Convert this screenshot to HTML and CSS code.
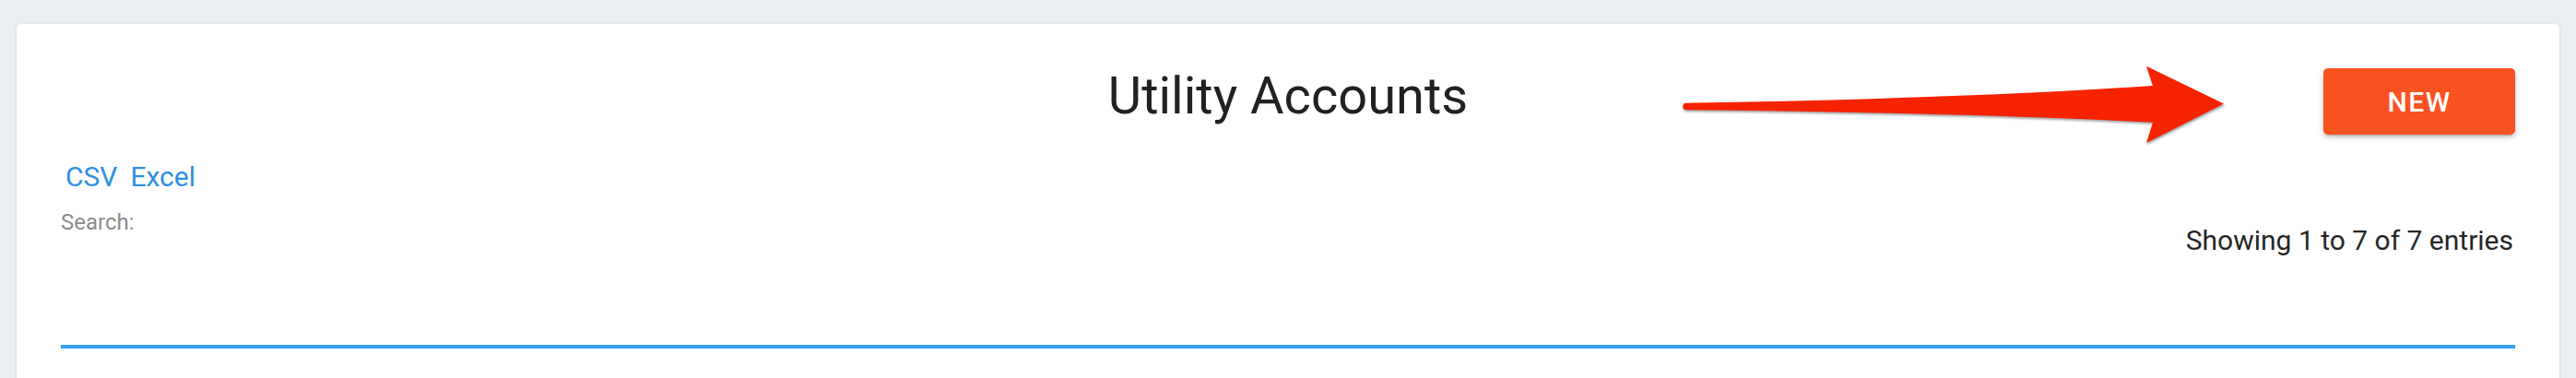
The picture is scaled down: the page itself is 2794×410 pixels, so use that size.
FILE: index.html
```html
<!DOCTYPE html>
<html lang="en">
<head>
<meta charset="utf-8">
<title>Utility Accounts</title>
<link rel="stylesheet" href="styles.css">
</head>
<body>
<main class="card">
  <header class="card-header">
    <div class="spacer"></div>
    <h1 class="title">Utility Accounts</h1>
    <div class="actions">
      <button class="btn-new" type="button">NEW</button>
    </div>
    <svg class="annotation-arrow" width="600" height="100" viewBox="0 0 600 100" aria-hidden="true">
      <path d="M4,46.7 Q300,42 510,28 L503,6.7 L587,47.5 L503,90 L510,67.7 Q300,57 4,54.3 A3.8,3.8 0 0 1 4,46.7 Z" fill="#f52300"/>
    </svg>
  </header>
  <div class="exports">
    <a class="export-link" href="#">CSV</a>
    <a class="export-link" href="#">Excel</a>
  </div>
  <div class="filter">
    <label class="search-label" for="search">Search:</label>
    <div class="info">Showing 1 to 7 of 7 entries</div>
    <input class="search-input" id="search" type="text">
  </div>
</main>
</body>
</html>
```

FILE: styles.css
```css
html, body {
  margin: 0;
  padding: 0;
}
body {
  background: #eaeef2;
  font-family: Roboto, "Noto Sans", "Liberation Sans", sans-serif;
  height: 410px;
  overflow: hidden;
}
.card {
  position: relative;
  margin: 26px 18px 0;
  background: #ffffff;
  border-radius: 5px;
  box-shadow: 0 1px 3px rgba(0, 0, 0, 0.12), 0 0 2px rgba(0, 0, 0, 0.05);
  padding: 45px 48px 0;
  min-height: 500px;
  box-sizing: border-box;
}
.card-header {
  display: grid;
  grid-template-columns: 1fr auto 1fr;
  align-items: start;
}
.title {
  margin: 0;
  font-size: 56px;
  font-weight: 400;
  line-height: normal;
  color: #212121;
}
.actions {
  display: flex;
  justify-content: flex-end;
}
.btn-new {
  margin-top: 3px;
  width: 208px;
  height: 72px;
  border: 0;
  border-radius: 5px;
  background: #f95221;
  color: #ffffff;
  font-family: Roboto, "Noto Sans", sans-serif;
  font-size: 30px;
  font-weight: 500;
  letter-spacing: 1.5px;
  box-shadow: 0 4px 2px -3px rgba(0, 0, 0, 0.2), 0 3px 4px rgba(0, 0, 0, 0.14), 0 2px 8px rgba(0, 0, 0, 0.12);
  cursor: pointer;
}
.annotation-arrow {
  position: absolute;
  left: 1807px;
  top: 39px;
  filter: drop-shadow(1px 2px 1px rgba(0, 0, 0, 0.35));
}
.exports {
  margin-top: 28px;
  padding-left: 5px;
  display: flex;
  gap: 14px;
}
.export-link {
  font-size: 30px;
  line-height: normal;
  color: #2e8fe4;
  text-decoration: none;
}
.filter {
  margin-top: 18px;
  display: grid;
  grid-template-columns: 1fr auto;
}
.search-label {
  grid-column: 1;
  grid-row: 1;
  font-size: 24px;
  line-height: normal;
  color: #8c8c8c;
  align-self: start;
}
.info {
  grid-column: 2;
  grid-row: 1;
  margin-top: 16px;
  margin-right: 2px;
  font-size: 30px;
  line-height: normal;
  color: #262626;
}
.search-input {
  grid-column: 1 / span 2;
  grid-row: 2;
  display: block;
  width: 100%;
  height: 100px;
  box-sizing: border-box;
  border: 0;
  border-bottom: 4px solid #35a2f4;
  outline: none;
  background: transparent;
  font-size: 28px;
  padding: 0;
}
```
